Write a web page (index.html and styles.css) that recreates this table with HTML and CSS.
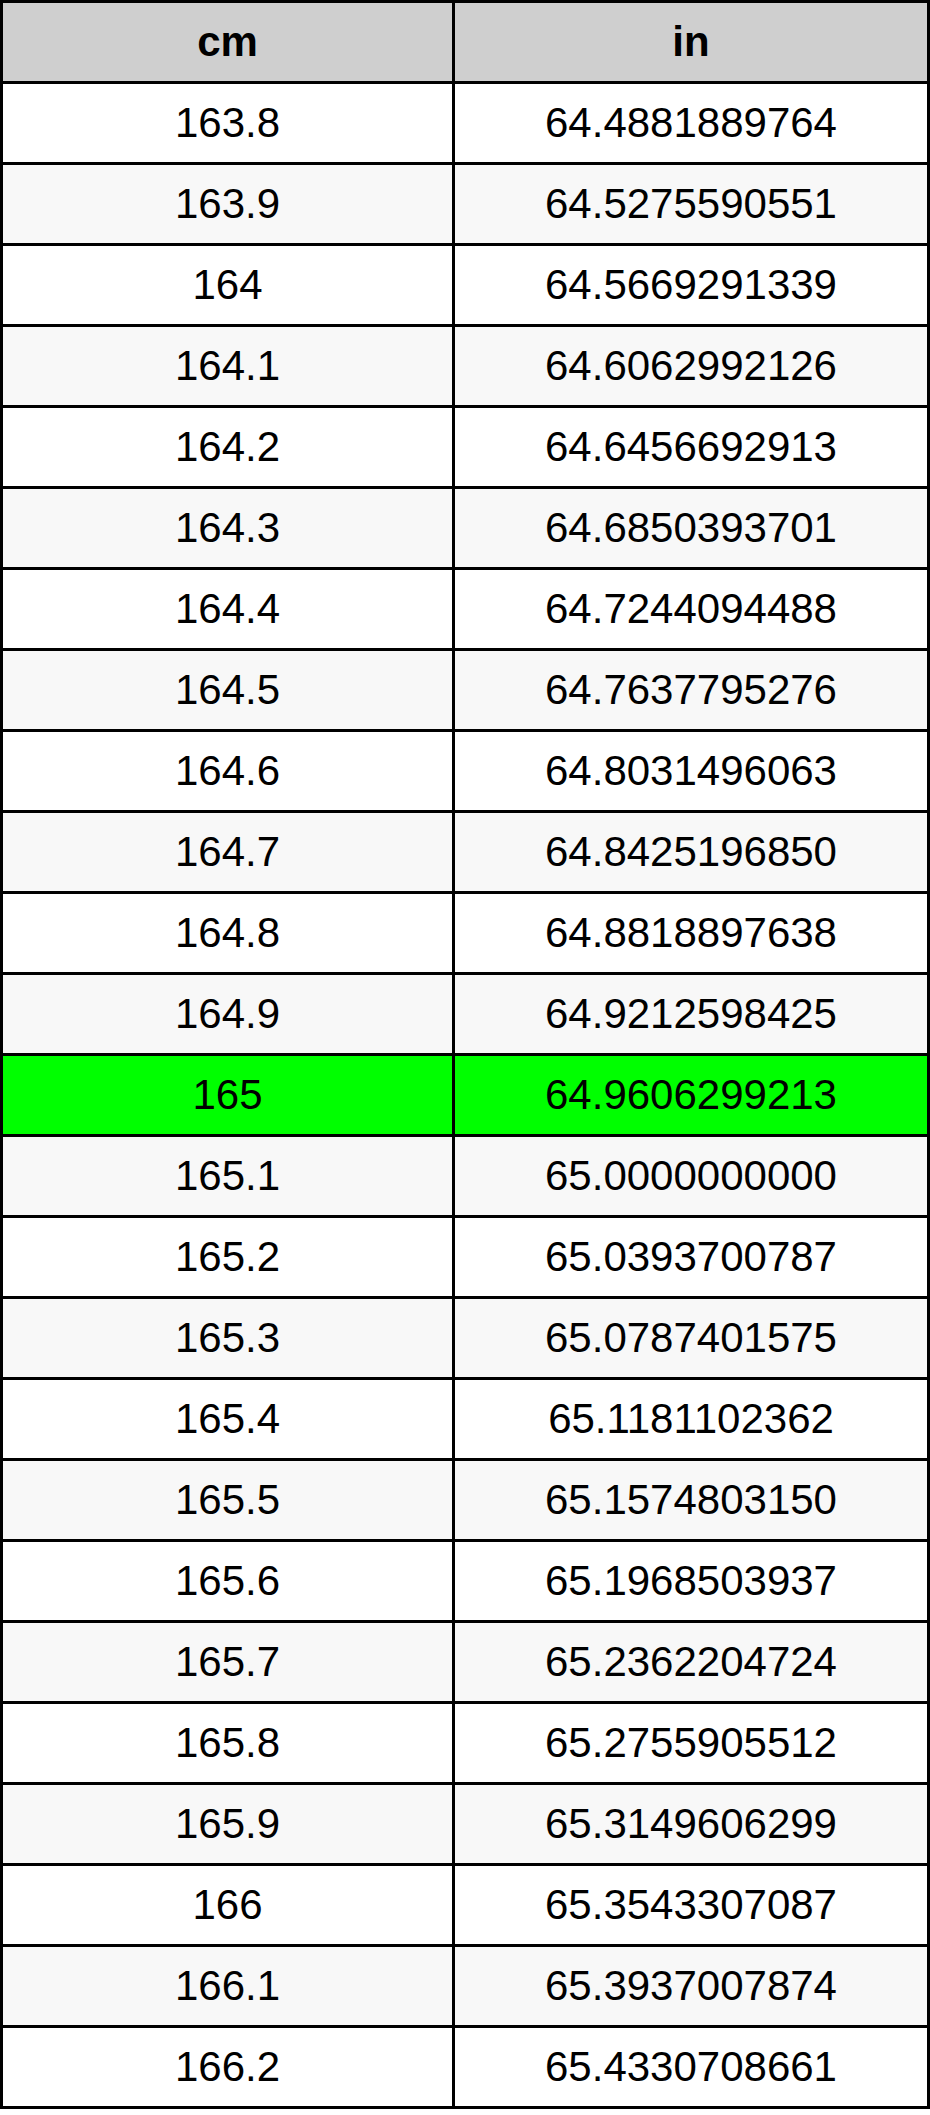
FILE: index.html
```html
<!DOCTYPE html>
<html>
<head>
<meta charset="utf-8">
<link rel="stylesheet" href="styles.css">
</head>
<body>
<table class="conv">
<thead>
<tr><th class="c1">cm</th><th class="c2">in</th></tr>
</thead>
<tbody>
<tr><td>163.8</td><td>64.4881889764</td></tr>
<tr class="alt"><td>163.9</td><td>64.5275590551</td></tr>
<tr><td>164</td><td>64.5669291339</td></tr>
<tr class="alt"><td>164.1</td><td>64.6062992126</td></tr>
<tr><td>164.2</td><td>64.6456692913</td></tr>
<tr class="alt"><td>164.3</td><td>64.6850393701</td></tr>
<tr><td>164.4</td><td>64.7244094488</td></tr>
<tr class="alt"><td>164.5</td><td>64.7637795276</td></tr>
<tr><td>164.6</td><td>64.8031496063</td></tr>
<tr class="alt"><td>164.7</td><td>64.8425196850</td></tr>
<tr><td>164.8</td><td>64.8818897638</td></tr>
<tr class="alt"><td>164.9</td><td>64.9212598425</td></tr>
<tr class="hl"><td>165</td><td>64.9606299213</td></tr>
<tr class="alt"><td>165.1</td><td>65.0000000000</td></tr>
<tr><td>165.2</td><td>65.0393700787</td></tr>
<tr class="alt"><td>165.3</td><td>65.0787401575</td></tr>
<tr><td>165.4</td><td>65.1181102362</td></tr>
<tr class="alt"><td>165.5</td><td>65.1574803150</td></tr>
<tr><td>165.6</td><td>65.1968503937</td></tr>
<tr class="alt"><td>165.7</td><td>65.2362204724</td></tr>
<tr><td>165.8</td><td>65.2755905512</td></tr>
<tr class="alt"><td>165.9</td><td>65.3149606299</td></tr>
<tr><td>166</td><td>65.3543307087</td></tr>
<tr class="alt"><td>166.1</td><td>65.3937007874</td></tr>
<tr><td>166.2</td><td>65.4330708661</td></tr>
</tbody>
</table>
</body>
</html>
```

FILE: styles.css
```css
html, body {
  margin: 0;
  padding: 0;
  background: #ffffff;
}

body {
  padding-bottom: 6px;
}

.conv {
  border-collapse: separate;
  border-spacing: 0;
  border-top: 3px solid #000;
  border-left: 3px solid #000;
  font-family: "Liberation Sans", Arial, sans-serif;
  font-size: 42px;
  color: #000;
  table-layout: fixed;
  width: 930px;
}

.conv th,
.conv td {
  border-right: 3px solid #000;
  border-bottom: 3px solid #000;
  height: 78px;
  padding: 0;
  text-align: center;
  vertical-align: middle;
  box-sizing: content-box;
}

.conv th {
  background: #cfcfcf;
  font-weight: bold;
}

.conv .c1 {
  width: 449px;
}

.conv .c2 {
  width: 472px;
}

.conv tbody tr {
  background: #ffffff;
}

.conv tbody tr.alt {
  background: #f8f8f8;
}

.conv tbody tr.hl {
  background: #00ff00;
}
```
